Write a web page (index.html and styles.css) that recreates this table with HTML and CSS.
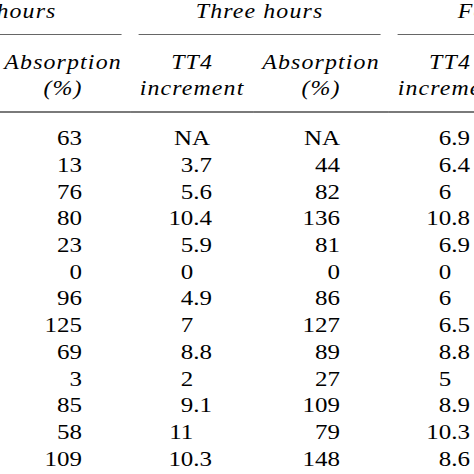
FILE: index.html
```html
<!DOCTYPE html>
<html>
<head>
<meta charset="utf-8">
<link rel="stylesheet" href="styles.css">
</head>
<body>
<div class="frame">
<table class="t">
<colgroup>
<col class="c-tt"><col class="c-ab">
<col class="c-tt"><col class="c-ab">
<col class="c-tt"><col class="c-ab">
</colgroup>
<thead>
<tr class="groups">
<th colspan="2"><div class="g">Two hours</div></th>
<th colspan="2"><div class="g">Three hours</div></th>
<th colspan="2"><div class="g">Four hours</div></th>
</tr>
<tr class="subs">
<th>TT4<br>increment</th><th>Absorption<br>(%)</th>
<th>TT4<br>increment</th><th>Absorption<br>(%)</th>
<th>TT4<br>increment</th><th>Absorption<br>(%)</th>
</tr>
</thead>
<tbody>
<tr><td class="tt"></td><td class="ab">63</td><td class="tt na">NA</td><td class="ab">NA</td><td class="tt"><span class="i">6</span>.9</td><td class="ab"></td></tr>
<tr><td class="tt"></td><td class="ab">13</td><td class="tt"><span class="i">3</span>.7</td><td class="ab">44</td><td class="tt"><span class="i">6</span>.4</td><td class="ab"></td></tr>
<tr><td class="tt"></td><td class="ab">76</td><td class="tt"><span class="i">5</span>.6</td><td class="ab">82</td><td class="tt"><span class="i">6</span></td><td class="ab"></td></tr>
<tr><td class="tt"></td><td class="ab">80</td><td class="tt"><span class="i">10</span>.4</td><td class="ab">136</td><td class="tt"><span class="i">10</span>.8</td><td class="ab"></td></tr>
<tr><td class="tt"></td><td class="ab">23</td><td class="tt"><span class="i">5</span>.9</td><td class="ab">81</td><td class="tt"><span class="i">6</span>.9</td><td class="ab"></td></tr>
<tr><td class="tt"></td><td class="ab">0</td><td class="tt"><span class="i">0</span></td><td class="ab">0</td><td class="tt"><span class="i">0</span></td><td class="ab"></td></tr>
<tr><td class="tt"></td><td class="ab">96</td><td class="tt"><span class="i">4</span>.9</td><td class="ab">86</td><td class="tt"><span class="i">6</span></td><td class="ab"></td></tr>
<tr><td class="tt"></td><td class="ab">125</td><td class="tt"><span class="i">7</span></td><td class="ab">127</td><td class="tt"><span class="i">6</span>.5</td><td class="ab"></td></tr>
<tr><td class="tt"></td><td class="ab">69</td><td class="tt"><span class="i">8</span>.8</td><td class="ab">89</td><td class="tt"><span class="i">8</span>.8</td><td class="ab"></td></tr>
<tr><td class="tt"></td><td class="ab">3</td><td class="tt"><span class="i">2</span></td><td class="ab">27</td><td class="tt"><span class="i">5</span></td><td class="ab"></td></tr>
<tr><td class="tt"></td><td class="ab">85</td><td class="tt"><span class="i">9</span>.1</td><td class="ab">109</td><td class="tt"><span class="i">8</span>.9</td><td class="ab"></td></tr>
<tr><td class="tt"></td><td class="ab">58</td><td class="tt"><span class="i">11</span></td><td class="ab">79</td><td class="tt"><span class="i">10</span>.3</td><td class="ab"></td></tr>
<tr><td class="tt"></td><td class="ab">109</td><td class="tt"><span class="i">10</span>.3</td><td class="ab">148</td><td class="tt"><span class="i">8</span>.6</td><td class="ab"></td></tr>
</tbody>
</table>
</div>
</body>
</html>
```
FILE: styles.css
```css
html, body {
  margin: 0;
  padding: 0;
  background: #ffffff;
  overflow: hidden;
  width: 474px;
  height: 474px;
}
.frame {
  transform: scaleX(1.136);
  transform-origin: 0 0;
  width: 420px;
}
.t {
  margin-left: -112.2px;
  width: 681.3px;
  table-layout: fixed;
  border-collapse: collapse;
  border-spacing: 0;
  font-family: "Liberation Serif", "Times New Roman", serif;
  color: #000;
}
.c-tt { width: 108.3px; }
.c-ab { width: 118.8px; }
th {
  font-weight: normal;
  font-style: italic;
  font-size: 21px;
  letter-spacing: 1px;
  text-align: center;
}
.groups th {
  padding: 0 7.5px;
}
.g {
  line-height: 22px;
  padding-bottom: 12px;
  border-bottom: 1px solid #666;
  white-space: nowrap;
}
.subs th {
  padding: 13.9px 0 10.1px;
  line-height: 26px;
  border-bottom: 2px solid #7a7a7a;
  white-space: nowrap;
}
td {
  font-size: 22px;
  line-height: 26.7px;
  padding: 0;
  white-space: nowrap;
}
tbody tr:first-child td {
  padding-top: 12.2px;
}
td.ab {
  text-align: right;
  padding-right: 42.7px;
}
td.tt {
  text-align: left;
  padding-left: 25.3px;
}
td.na {
  text-align: center;
  padding-left: 0;
}
.i {
  display: inline-block;
  width: 30px;
  text-align: right;
}
```
